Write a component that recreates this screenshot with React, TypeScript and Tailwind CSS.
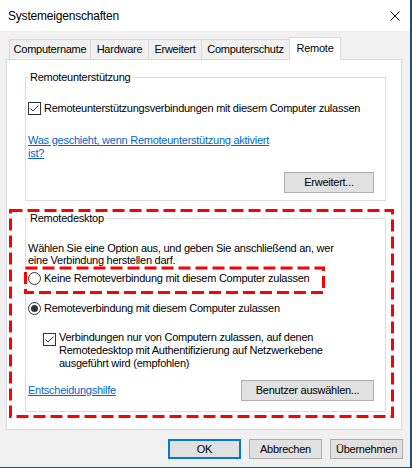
import React from "react";

const font = { fontFamily: '"Liberation Sans", Arial, sans-serif' };

function CheckBox({ checked }: { checked: boolean }) {
  return (
    <svg width="13" height="13" viewBox="0 0 13 13" className="shrink-0 block">
      <rect x="0.5" y="0.5" width="12" height="12" fill="#fff" stroke="#333" />
      {checked && (
        <polyline points="2.5,6.5 5,9 10.5,3.5" fill="none" stroke="#333" strokeWidth="1" />
      )}
    </svg>
  );
}

function Radio({ checked }: { checked: boolean }) {
  return (
    <svg width="13" height="13" viewBox="0 0 13 13" className="shrink-0 block">
      <circle cx="6.5" cy="6.5" r="6" fill="#fff" stroke="#333" />
      {checked && <circle cx="6.5" cy="6.5" r="3.5" fill="#333" />}
    </svg>
  );
}

function Button({ label, className = "" }: { label: string; className?: string }) {
  return (
    <div
      className={`h-[21px] flex items-center justify-center bg-[#e1e1e1] border border-[#adadad] text-[11px] leading-[15px] text-black ${className}`}
    >
      {label}
    </div>
  );
}

function Tab({ label, width }: { label: string; width: string }) {
  return (
    <div
      className={`${width} h-[20px] flex items-center justify-center border-l border-t border-[#d9d9d9] bg-[#f0f0f0] text-[11px] leading-[15px] text-black`}
    >
      {label}
    </div>
  );
}

function Group({ title, children }: { title: string; children: React.ReactNode }) {
  return (
    <fieldset className="border border-[#dcdcdc] m-0 p-0 min-w-0">
      <legend className="ml-[2px] px-[2px] text-[11px] leading-[15px] text-black">{title}</legend>
      {children}
    </fieldset>
  );
}

export default function App() {
  return (
    <div
      className="relative w-[412px] h-[468px] bg-[#f0f0f0] border-r-2 border-b border-[#1e4f7a] flex flex-col overflow-hidden tracking-[-0.25px]"
      style={font}
    >
      {/* Title bar */}
      <div className="h-[31px] bg-white flex items-center justify-between pl-[8px] pr-[10px] shrink-0">
        <span className="text-[12px] leading-[15px] tracking-[-0.2px] text-black mt-[2px]">Systemeigenschaften</span>
        <svg width="10" height="10" viewBox="0 0 10 10" className="mt-[1px]">
          <path d="M0.5 0.5 L9.5 9.5 M9.5 0.5 L0.5 9.5" stroke="#111" strokeWidth="1" />
        </svg>
      </div>

      {/* Dialog body */}
      <div className="pl-[6px] pr-[8px] pt-[6px] flex flex-col">
        {/* Tabs */}
        <div className="flex items-end pl-[3px] h-[22px]">
          <Tab label="Computername" width="w-[81px]" />
          <Tab label="Hardware" width="w-[58px]" />
          <Tab label="Erweitert" width="w-[53px]" />
          <Tab label="Computerschutz" width="w-[88px]" />
          <div className="relative z-10 w-[52px] h-[23px] -mb-px border-l border-t border-r border-[#d9d9d9] bg-white flex justify-center pt-[3px] text-[11px] leading-[15px] text-black">
            Remote
          </div>
        </div>

        {/* Tab page */}
        <div className="w-[396px] h-[371px] bg-white border border-[#d9d9d9] pl-[18px] pr-[15px] pt-[10px]">
          <Group title="Remoteunterstützung">
            <div className="pl-[2px] pr-[11px] pb-[7px] flex flex-col">
              <div className="mt-[16px] h-[15px] flex items-center gap-[3px]">
                <CheckBox checked />
                <span className="text-[11px] leading-[15px] text-black">
                  Remoteunterstützungsverbindungen mit diesem Computer zulassen
                </span>
              </div>
              <div className="mt-[18px] text-[11px] leading-[13px] text-[#0066cc]">
                <span className="underline">Was geschieht, wenn Remoteunterstützung aktiviert</span>
                <br />
                <span className="underline">ist?</span>
              </div>
              <div className="mt-[12px] flex justify-end">
                <Button label="Erweitert..." className="w-[90px]" />
              </div>
            </div>
          </Group>

          <div className="mt-[10px]">
            <Group title="Remotedesktop">
              <div className="pl-[2px] pr-[11px] pb-[10px] flex flex-col">
                <p className="mt-[16px] text-[11px] leading-[12px] text-black">
                  Wählen Sie eine Option aus, und geben Sie anschließend an, wer
                  <br />
                  eine Verbindung herstellen darf.
                </p>
                <div className="mt-[5px] h-[15px] flex items-center gap-[3px]">
                  <Radio checked={false} />
                  <span className="text-[11px] leading-[15px] text-black">
                    Keine Remoteverbindung mit diesem Computer zulassen
                  </span>
                </div>
                <div className="mt-[15px] h-[15px] flex items-center gap-[3px]">
                  <Radio checked />
                  <span className="text-[11px] leading-[15px] text-black">
                    Remoteverbindung mit diesem Computer zulassen
                  </span>
                </div>
                <div className="mt-[15px] pl-[15px] flex items-start gap-[3px]">
                  <div className="mt-[2px]">
                    <CheckBox checked />
                  </div>
                  <span className="text-[11px] leading-[13px] text-black">
                    Verbindungen nur von Computern zulassen, auf denen
                    <br />
                    Remotedesktop mit Authentifizierung auf Netzwerkebene
                    <br />
                    ausgeführt wird (empfohlen)
                  </span>
                </div>
                <div className="mt-[10px] flex items-center justify-between">
                  <span className="text-[11px] leading-[15px] text-[#0066cc] underline">
                    Entscheidungshilfe
                  </span>
                  <Button label="Benutzer auswählen..." className="w-[133px]" />
                </div>
              </div>
            </Group>
          </div>
        </div>

        {/* Dialog buttons */}
        <div className="mt-[9px] -mr-px flex justify-end gap-[8px]">
          <div className="w-[73px] h-[20px] flex items-center justify-center bg-[#e1e1e1] border-2 border-[#0078d7] text-[11px] leading-[15px] text-black">
            OK
          </div>
          <div className="w-[73px] h-[20px] flex items-center justify-center bg-[#e1e1e1] border border-[#adadad] text-[11px] leading-[15px] text-black">
            Abbrechen
          </div>
          <div className="w-[73px] h-[20px] flex items-center justify-center bg-[#e1e1e1] border border-[#adadad] text-[11px] leading-[15px] text-black">
            Übernehmen
          </div>
        </div>
      </div>

      {/* Red dashed highlight frames */}
      <svg className="absolute left-0 top-0 pointer-events-none" width="412" height="468">
        <rect x="10.5" y="210.5" width="382" height="206" fill="none" stroke="#f00" strokeWidth="3" strokeDasharray="12 5" />
        <rect x="25.5" y="268" width="298" height="24.5" fill="none" stroke="#f00" strokeWidth="3" strokeDasharray="12 5" />
      </svg>
    </div>
  );
}
